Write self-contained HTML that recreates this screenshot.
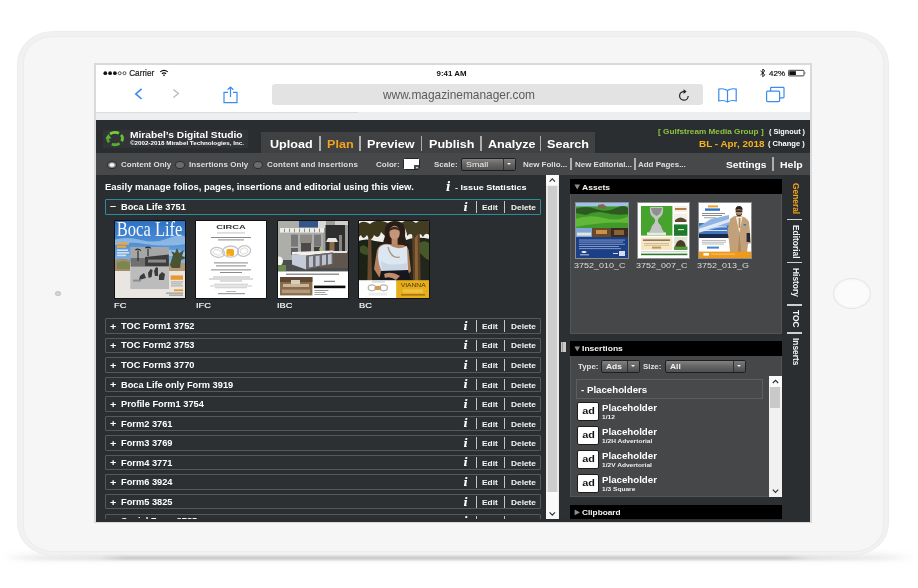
<!DOCTYPE html>
<html><head><meta charset="utf-8"><title>Mirabel's Digital Studio</title>
<style>
*{box-sizing:border-box;margin:0;padding:0}
html,body{width:918px;height:588px;background:#fff;overflow:hidden}
body{position:relative;font-family:"Liberation Sans",Arial,sans-serif;color:#fff}
.a{position:absolute;white-space:nowrap}
#root{position:absolute;left:0;top:0;width:918px;height:588px;will-change:transform}
.sx,.tab,.tl,.rt,.re,.pht,.al,.p1,.p2,.lb,.sel span{transform:scaleX(1.14);transform-origin:0 50%}
.b{font-weight:bold}
/* device */
#shadow{left:0;top:555.6px;width:918px;height:4px;background:linear-gradient(90deg,rgba(200,200,200,0) 10px,#ececec 50px,#e4e4e4 100px,#cbcbcb 125px,#cbcbcb 785px,#e2e2e2 810px,#ececec 860px,rgba(200,200,200,0) 905px);filter:blur(.8px)}
#shadow2{left:0;top:553px;width:918px;height:8px;background:linear-gradient(90deg,#fff,#f1f1f1 40px,#f1f1f1 880px,#fff);filter:blur(2px)}
#dev{left:17px;top:31px;width:872px;height:525px;border-radius:36px/33px;background:#f1f1f1;border:1px solid #ededed}
#dev2{left:22.5px;top:35.5px;width:861px;height:516.5px;border-radius:30px/27px;background:#f6f6f6;border:1px solid #ececec}
#cam{left:54.5px;top:290.5px;width:6px;height:5px;border-radius:50%;background:#d4d4d4;border:1.5px solid #c4c4c4}
#home{left:833px;top:277.5px;width:38px;height:31.5px;border-radius:50%;background:#fbfbfb;border:1.5px solid #e6e6e6;box-shadow:inset 0 0 3px #f0f0f0}
#scr{left:94px;top:63px;width:718px;height:460px;background:#fff;border:2px solid #d9d9d9;overflow:hidden}
/* ios */
.st{font-size:7.6px;color:#111;line-height:10px}
#bar{left:96px;top:111.6px;width:714px;height:8.6px;background:#edeeef}
#bar i{position:absolute;left:0;top:0;width:262px;height:1px;background:#dcdddd}
#url{left:272px;top:84.4px;width:430.8px;height:20.6px;border-radius:3px;background:#e3e3e4}
#urlt{left:272px;top:84px;width:430px;height:21.5px;line-height:21.5px;text-align:center;font-size:11.4px;color:#4a4a4a;padding-right:3px}
/* app */
#app{left:96px;top:120px;width:714px;height:401.5px;background:#2b2e31}

/* header */
#logo{left:103px;top:129.5px;width:145px;height:18.5px;background:#323437}
#tabs{left:261px;top:132px;width:334px;height:21px;background:#3f4143}
.tab{top:136px;height:16px;line-height:16px;font-size:11.05px;font-weight:bold;color:#fff}
.tsep{top:136.4px;width:1.3px;height:14.6px;background:#aeaeae}
#tool{left:96px;top:153px;width:714px;height:22px;background:#474849}
.tl{top:159px;height:11px;line-height:11px;font-size:7.02px;font-weight:bold;color:#dedede}
.rad{top:160.6px;width:9.6px;height:8.2px;border-radius:50%;background:#6b6b6b;border:1px solid #2e2e2e}
.sel{height:12.6px;border:1px solid #1f1f1f;border-radius:2px;background:linear-gradient(#828282,#666 45%,#505050)}
.sel i{position:absolute;right:0;top:0;bottom:0;width:12.4px;border-left:1px solid #303030;background:linear-gradient(#7a7a7a,#4c4c4c)}
.sel i:after{content:"";position:absolute;left:2.9px;top:4.2px;border:2.7px solid transparent;border-top:2.7px solid #f2f2f2}
.sel span{position:absolute;left:4.4px;top:1.3px;line-height:10.6px;font-size:7.8px;color:#f0f0f0}

/* left panel */
.row{left:105px;width:436px;height:15.5px;border:1px solid #56595c;background:#2d3033;border-radius:1px}
.rt{left:110px;margin-top:.9px;height:15px;line-height:15px;font-size:8.13px;font-weight:bold;color:#fff}
.ri{left:463.4px;margin-top:.6px;height:15px;line-height:15px;font-family:"DejaVu Serif",serif;font-style:italic;font-weight:bold;font-size:11.5px}
.rs{width:1px;height:11.6px;background:#c6c6c6}
.re{margin-top:.9px;height:15px;line-height:15px;font-size:7.3px;font-weight:bold;color:#f4f4f4}
.th{top:219.8px;width:72px;height:78.8px;background:#111;border-radius:1.5px}
.th svg{position:absolute;left:1px;top:1px}
.lb{top:300.4px;height:11px;line-height:11px;font-size:8.12px;color:#fff;-webkit-text-stroke:.15px #fff}
#lclip{left:96px;top:175px;width:450px;height:344px;overflow:hidden}
#vsb{left:546.2px;top:175px;width:12.9px;height:344px;background:#e9e9e9}
#vsb .t{position:absolute;left:1.9px;top:10.5px;width:8.8px;height:306.5px;background:#cdcdcd}

/* right panel */
#rp{left:559px;top:175px;width:223px;height:344px;background:#2d3033}
.ph{left:570px;width:212px;background:#000}
.pht{left:582.4px;height:15px;line-height:15px;font-size:7.50px;font-weight:bold;color:#f2f2f2}
.pb{left:570px;width:212px;background:#464748;border:1px solid #545556;border-top:0}
.at{top:202.4px;width:53.6px;height:56.6px;border:1px solid #8e8e8e;background:#fff;overflow:hidden}
.al{top:259.6px;height:11px;line-height:11px;font-size:7.89px;color:#ddd}
.adb{left:577.4px;margin-top:-.8px;width:21.8px;height:19.2px;border:1.3px solid #1c1c1c;border-radius:2px;background:#fff;color:#111;font-weight:bold;font-size:9.5px;line-height:16px;text-align:center}
.adb span{display:inline-block;transform:scaleX(1.14)}
.p1{left:601.6px;height:12px;line-height:12px;font-size:8.51px;font-weight:bold;color:#fff}
.p2{left:602.2px;height:8px;line-height:8px;font-size:5.79px;font-weight:bold;color:#f0f0f0}
.vt{transform:scaleX(1.1);left:790.4px;width:12px;font-size:8.4px;font-weight:bold;line-height:12px;writing-mode:vertical-rl;color:#f4f4f4}
.vs{left:787px;width:15px;height:1.3px;background:#d0d0d0}
</style></head><body>
<div id="root">
<svg width="0" height="0" style="position:absolute"><defs>
<filter id="b1" x="-5%" y="-5%" width="110%" height="110%"><feGaussianBlur stdDeviation=".55"/></filter>
<filter id="b2" x="-5%" y="-5%" width="110%" height="110%"><feGaussianBlur stdDeviation=".9"/></filter>
<linearGradient id="sky" x1="0" y1="0" x2="0" y2="1"><stop offset="0" stop-color="#2b6ec2"/><stop offset=".55" stop-color="#4d8fd6"/><stop offset="1" stop-color="#86b4e2"/></linearGradient>
</defs></svg>
<div class="a" id="shadow2"></div>
<div class="a" id="dev"></div>
<div class="a" id="dev2"></div>
<div class="a" id="shadow"></div>
<div class="a" id="cam"></div>
<div class="a" id="home"></div>
<div class="a" id="scr"></div>
<!-- IOS-STATUS -->
<svg class="a" style="left:102px;top:69.1px" width="70" height="9" viewBox="0 0 70 9">
<circle cx="3.3" cy="4.2" r="1.85" fill="#111"/><circle cx="8.1" cy="4.2" r="1.85" fill="#111"/><circle cx="12.9" cy="4.2" r="1.85" fill="#111"/>
<circle cx="17.7" cy="4.2" r="1.5" fill="none" stroke="#111" stroke-width=".7"/><circle cx="22.5" cy="4.2" r="1.5" fill="none" stroke="#111" stroke-width=".7"/>
<g fill="none" stroke="#111" stroke-width="1.15"><path d="M58.2 2.9 Q62 -0.3 65.8 2.9"/><path d="M59.9 4.7 Q62 2.9 64.1 4.7"/></g><path d="M60.8 5.9 Q62 5 63.2 5.9 L62 7.3Z" fill="#111"/>
</svg>
<div class="a st" style="left:129.2px;top:69.2px;font-size:8.2px;color:#1c1c1c;-webkit-text-stroke:.2px #1c1c1c">Carrier</div>
<div class="a st b" style="left:436.5px;top:68.6px;font-size:7.9px">9:41 AM</div>
<svg class="a" style="left:759px;top:68.1px" width="8" height="10" viewBox="0 0 8 10"><path d="M1.5 2.8 L5.8 6.8 L3.8 8.8 V1 L5.8 3 L1.5 7" fill="none" stroke="#111" stroke-width=".9"/></svg>
<div class="a st" style="left:769px;top:68.8px;font-size:8px;-webkit-text-stroke:.2px #111">42%</div>
<svg class="a" style="left:787.5px;top:69.1px" width="19" height="8" viewBox="0 0 19 8"><rect x=".4" y="1.3" width="15.6" height="5.6" rx="1" fill="none" stroke="#111" stroke-width=".8"/><rect x="1.3" y="2.2" width="6.6" height="3.8" fill="#111"/><path d="M16.8 3 Q18.2 4.1 16.8 5.2Z" fill="#111"/></svg>
<!-- SAFARI -->
<svg class="a" style="left:130px;top:84px" width="60" height="20" viewBox="0 0 60 20"><path d="M11.6 4.8 L5.8 9.9 L11.6 15" fill="none" stroke="#3a8aef" stroke-width="1.6"/><path d="M43.4 5.6 L48.4 9.6 L43.4 13.6" fill="none" stroke="#b9b9b9" stroke-width="1.3"/></svg>
<svg class="a" style="left:220.5px;top:83.8px" width="20" height="22" viewBox="0 0 20 22"><g fill="none" stroke="#3a8aef" stroke-width="1.2"><path d="M7 8.4 H3 V18.6 H16 V8.4 H12"/><path d="M9.5 13 V3.2 M6.6 5.8 L9.5 3 L12.4 5.8"/></g></svg>
<div class="a" id="url"></div>
<div class="a" style="left:383px;top:84px;height:21.5px;line-height:23px;font-size:11.9px;color:#5c5c5c">www.magazinemanager.com</div>
<svg class="a" style="left:677px;top:88px" width="14" height="15" viewBox="0 0 14 15"><path d="M11.2 8 A4.3 4.3 0 1 1 7 3.6" fill="none" stroke="#222" stroke-width="1.2"/><path d="M6.6 1.2 L9.6 3.6 L6.6 6Z" fill="#222"/></svg>
<svg class="a" style="left:716px;top:85.7px" width="24" height="18" viewBox="0 0 24 18"><g fill="none" stroke="#3a8aef" stroke-width="1.2"><path d="M11.5 4.6 Q7.5 1.8 2.8 3.2 V15 Q7.5 13.6 11.5 16 Q15.5 13.6 20.2 15 V3.2 Q15.5 1.8 11.5 4.6 V16"/></g></svg>
<svg class="a" style="left:764px;top:84.6px" width="24" height="20" viewBox="0 0 24 20"><g fill="none" stroke="#3a8aef" stroke-width="1.2"><rect x="2.6" y="6.2" width="13" height="10.4" rx="1"/><path d="M6.6 6 V3.2 Q6.6 2.4 7.4 2.4 H19.2 Q20 2.4 20 3.2 V12 Q20 12.8 19.2 12.8 H15.8"/></g></svg>
<div class="a" id="bar"><i></i></div>
<div class="a" id="app"></div>
<!-- APP-HEADER -->
<div class="a" id="logo"></div>
<svg class="a" style="left:103.5px;top:128.5px" width="22" height="19" viewBox="0 0 22 19"><g fill="none" stroke-width="2.8">
<path d="M6 5 A7.6 6.1 0 0 1 15 4.3" stroke="#72d03c"/><path d="M17.1 5.9 A7.6 6.1 0 0 1 17.6 12.3" stroke="#63c035"/><path d="M15.6 14.3 A7.6 6.1 0 0 1 7.8 15.2" stroke="#58b030"/><path d="M5 13.2 A7.6 6.1 0 0 1 3.6 8.6" stroke="#4fa52c"/></g>
<path d="M1.4 9.4 L4.4 5 L7.4 9.6Z" fill="#5cb833"/></svg>
<div class="a b" style="left:130px;top:128.8px;line-height:12px;font-size:9.4px;transform:scaleX(1.09);transform-origin:0 50%">Mirabel’s Digital Studio</div>
<div class="a b" style="left:130px;top:138.6px;line-height:8px;font-size:6.25px">©2002-2018 Mirabel Technologies, Inc.</div>
<div class="a" id="tabs"></div>
<div class="a tab" style="left:270px">Upload</div><div class="a tsep" style="left:319.4px"></div>
<div class="a tab" style="left:326.5px;color:#f5a31d">Plan</div><div class="a tsep" style="left:359.4px"></div>
<div class="a tab" style="left:367px">Preview</div><div class="a tsep" style="left:420.7px"></div>
<div class="a tab" style="left:428.5px">Publish</div><div class="a tsep" style="left:480.4px"></div>
<div class="a tab" style="left:487.6px">Analyze</div><div class="a tsep" style="left:540.1px"></div>
<div class="a tab" style="left:547px">Search</div>
<div class="a b sx" style="left:658px;top:126.5px;line-height:10px;font-size:7.19px;color:#8cc540">[ Gulfstream Media Group ]</div>
<div class="a b sx" style="left:768.5px;top:126.5px;line-height:10px;font-size:6.40px">( Signout )</div>
<div class="a b sx" style="left:698.5px;top:137.6px;line-height:12px;font-size:8.68px;color:#f7b219">BL - Apr, 2018</div>
<div class="a b sx" style="left:768px;top:138.8px;line-height:10px;font-size:6.58px">( Change )</div>
<div class="a" id="tool"></div>
<div class="a rad" style="left:107.2px;background:radial-gradient(#fff 0 1.3px,#8e8e8e 3.2px,#6b6b6b 4.4px)"></div>
<div class="a tl" style="left:121px">Content Only</div>
<div class="a rad" style="left:175.4px"></div>
<div class="a tl sx" style="left:189.4px;letter-spacing:.06px">Insertions Only</div>
<div class="a rad" style="left:253.4px"></div>
<div class="a tl sx" style="left:267.3px;letter-spacing:.16px">Content and Insertions</div>
<div class="a tl" style="left:376px">Color:</div>
<div class="a" style="left:403.4px;top:157.6px;width:16.2px;height:12.9px;background:#fff;border:1.2px solid #262626;border-radius:1.5px"><i style="position:absolute;right:0;bottom:0;width:5px;height:4px;background:#4a4a4a"></i><i style="position:absolute;right:.7px;bottom:.9px;border:1.8px solid transparent;border-top:2.2px solid #fff;border-bottom:0"></i></div>
<div class="a tl" style="left:434px">Scale:</div>
<div class="a sel" style="left:460.6px;top:158px;width:55.6px"><span>Small</span><i></i></div>
<div class="a tl sx" style="left:523px;letter-spacing:-.02px">New Folio...</div><div class="a tsep" style="left:570.4px;top:158px;height:12px"></div>
<div class="a tl sx" style="left:574.6px;letter-spacing:-.02px">New Editorial...</div><div class="a tsep" style="left:634.4px;top:158px;height:12px"></div>
<div class="a tl sx" style="left:638.4px;letter-spacing:-.02px">Add Pages...</div>
<div class="a b sx" style="left:725.5px;top:158.7px;line-height:13px;font-size:9.01px">Settings</div><div class="a tsep" style="left:772.4px;top:157px;height:14px"></div>
<div class="a b sx" style="left:779.6px;top:158.7px;line-height:13px;font-size:9.21px">Help</div>
<!-- APP-LEFT -->
<div class="a" id="lclip"><div class="a" style="left:-96px;top:-175px">
<div class="a b sx" style="left:104.7px;top:180.5px;line-height:12px;font-size:8.32px">Easily manage folios, pages, insertions and editorial using this view.</div>
<div class="a ri" style="left:446px;top:179.5px;font-size:12px">i</div><div class="a b sx" style="left:455px;top:181.9px;line-height:12px;font-size:7.96px">- Issue Statistics</div>
<div class="a row" style="top:199.30px;border-color:#2a8d9c"></div><div class="a rt" style="top:199.30px;left:110px;font-size:9.6px;margin-top:-1.1px">–</div><div class="a rt" style="top:199.30px;left:121px">Boca Life 3751</div><div class="a ri" style="top:199.30px">i</div><div class="a rs" style="left:476px;top:201.30px"></div><div class="a re" style="top:199.30px;left:482px">Edit</div><div class="a rs" style="left:504px;top:201.30px"></div><div class="a re" style="top:199.30px;left:510.6px">Delete</div>
<div class="a th" style="left:113.8px"><svg width="70" height="76.8" viewBox="0 0 70 76.8"><rect width="70" height="77" fill="#e9e6e2"/>
<g filter="url(#b1)"><rect x="-2" y="-2" width="74" height="44" fill="url(#sky)"/>
<path d="M-2 19 Q12 15 26 19 T54 17 T72 18 V23 Q50 26 30 23 T-2 25Z" fill="#d9e8f6" opacity=".45"/><path d="M40 30 Q52 27 72 31 V35 H40Z" fill="#cfe0f2" opacity=".5"/>
<path d="M-2 40 Q6 36 15 39 V52 H-2Z" fill="#a58a68"/><path d="M2 42 Q8 38 15 42 V48 H2Z" fill="#7c8650"/>
<rect x="54" y="42" width="18" height="9" fill="#b39878"/><path d="M55 44 L58 34 L56 30 L60 32 L62 27 L64 32 L69 29 L67 35 L71 37 L66 39 L65 47 H57Z" fill="#465230"/>
<rect x="-2" y="50" width="74" height="30" fill="#e9e6e2"/>
<rect x="2" y="21.6" width="12" height="2.2" fill="#f0a53a"/><rect x="2" y="24.6" width="9" height="2.2" fill="#f0a53a"/><rect x="2" y="28.4" width="11" height="1.6" fill="#cfe0f4"/><rect x="2" y="31" width="12" height="1.6" fill="#cfe0f4"/><rect x="2" y="33.6" width="9" height="1.6" fill="#cfe0f4"/>
<rect x="15.6" y="26.2" width="38.2" height="41.6" fill="#b0b0b0"/>
<rect x="15.6" y="26.2" width="38.2" height="12" fill="#a6a6a6"/><rect x="15.6" y="37" width="38.2" height="9" fill="#707070"/><path d="M30 36 L53.8 33.6 V45 H30Z" fill="#3e3e3e"/><rect x="33" y="38.6" width="18" height="3" fill="#8a8a8a"/>
<path d="M23 40 V29.6 M20.4 29 Q23 27 26 29.6 M33 35 V27.6 M30.4 27 Q33 25 36 27.4" stroke="#262626" stroke-width="1.1" fill="none"/>
<rect x="15.6" y="45.6" width="38.2" height="22.2" fill="#bcbcbc"/>
<path d="M25 55 l4-3 2 5 -7 2Z M33 52 l2.6-4 2 1 -1 7 -3 1Z M39 50 l2-4 2 1 0 8 -3 0Z M44 54 l3-3 3 2 -1 6 -5 0Z" fill="#3a3a3a"/><rect x="18" y="58.6" width="8" height="2" fill="#8e8e8e"/>
<rect x="55.6" y="54.4" width="12.4" height="4.4" fill="#e8982e"/><g fill="#a9a39b"><rect x="56" y="60.4" width="12" height="1"/><rect x="56" y="62.4" width="11" height="1"/><rect x="56" y="64.4" width="12" height="1"/></g><rect x="59" y="68.4" width="9" height="1.8" fill="#e8982e"/><rect x="51" y="71.6" width="17" height="1" fill="#8c867e"/><rect x="54" y="73.6" width="14" height="1" fill="#8c867e"/>
</g>
<text x="1.8" y="15.2" font-family="Liberation Serif,serif" font-size="20.5" fill="#fff" fill-opacity=".95" textLength="65.6" lengthAdjust="spacingAndGlyphs">Boca Life</text></svg></div>
<div class="a th" style="left:195.3px"><svg width="70" height="76.8" viewBox="0 0 70 76.8"><rect width="70" height="77" fill="#fff"/>
<text x="35" y="8.5" text-anchor="middle" font-family="Liberation Sans,sans-serif" font-weight="bold" font-size="6.2" fill="#333" textLength="29.4" lengthAdjust="spacingAndGlyphs">CIRCA</text>
<g filter="url(#b1)"><rect x="21" y="11.6" width="28" height=".7" fill="#aaa"/>
<g fill="#8a8a8a"><rect x="15" y="16" width="40" height="1"/><rect x="22" y="18.4" width="26" height="1"/>
<rect x="18" y="41.4" width="34" height="1"/><rect x="20" y="44.4" width="30" height="1"/><rect x="15" y="48.4" width="40" height="1"/><rect x="24" y="51" width="22" height="1"/></g>
<g fill="#a6a6a6"><rect x="17" y="55.6" width="37" height=".8"/><rect x="13" y="57.6" width="44" height=".8"/><rect x="24" y="59.6" width="22" height=".8"/>
<rect x="18" y="62.8" width="34" height=".8" fill="#bcbcbc"/><rect x="14" y="64.6" width="42" height=".8" fill="#bcbcbc"/><rect x="19" y="66.4" width="32" height=".8" fill="#bcbcbc"/>
<rect x="30" y="70.2" width="10" height=".8"/><rect x="22" y="72.2" width="27" height="1" fill="#8a8a8a"/></g>
<g fill="none" stroke="#c2c6ca" stroke-width="1.3"><ellipse cx="21.6" cy="31.4" rx="7" ry="4.8" transform="rotate(12 21.6 31.4)"/><ellipse cx="34.6" cy="30.6" rx="8" ry="5.6"/><ellipse cx="48" cy="30" rx="6.6" ry="5.2" transform="rotate(-14 48 30)"/></g>
<g fill="none" stroke="#dcd8c8" stroke-width=".9"><ellipse cx="21.6" cy="31.4" rx="4.6" ry="2.6" transform="rotate(12 21.6 31.4)"/><ellipse cx="48" cy="30" rx="4" ry="3" transform="rotate(-14 48 30)"/></g>
<rect x="30.4" y="28" width="7.6" height="7" rx="1.6" fill="#f6a61c"/><circle cx="33" cy="34" r="1.6" fill="#f9c53e"/></g></svg></div>
<div class="a th" style="left:276.8px"><svg width="70" height="76.8" viewBox="0 0 70 76.8"><rect width="70" height="77" fill="#fff"/>
<g filter="url(#b1)"><rect x="-1" y="-1" width="72" height="51.6" fill="#9c9c99"/>
<rect x="-1" y="-1" width="46" height="40" fill="#adadaa"/><rect x="21" y="-1" width="19" height="7.4" fill="#33548a"/><rect x="40" y="-1" width="8" height="8" fill="#d9d9d6"/><rect x="57" y="-1" width="14" height="5" fill="#cfcfcc"/>
<rect x="2" y="7" width="44" height="4.6" fill="#ecebe6"/><g fill="#8e8e88"><rect x="6" y="7.6" width="1" height="3.6"/><rect x="11" y="7.6" width="1" height="3.6"/><rect x="16" y="7.6" width="1" height="3.6"/><rect x="21" y="7.6" width="1" height="3.6"/><rect x="26" y="7.6" width="1" height="3.6"/><rect x="31" y="7.6" width="1" height="3.6"/><rect x="36" y="7.6" width="1" height="3.6"/><rect x="41" y="7.6" width="1" height="3.6"/></g>
<rect x="13" y="13.6" width="7" height="12" fill="#77787a"/><rect x="22" y="13.6" width="12" height="9" fill="#8e8b84"/><rect x="23" y="22" width="10" height="12" fill="#4c4a48"/><rect x="36" y="13.6" width="7" height="12" fill="#77787a"/><rect x="13" y="27" width="7" height="7" fill="#5e5e5e"/><rect x="36" y="26" width="6" height="8" fill="#3e3e3e"/>
<rect x="47.5" y="4" width="19.5" height="27" fill="#2f2e2d"/><rect x="61" y="14" width="3" height="18" fill="#8a8480"/><path d="M50 17 h8 l2 4 h-12Z" fill="#e8e6e0"/><rect x="51.5" y="21" width="5" height="9" fill="#8a6c4c"/>
<rect x="-1" y="39" width="72" height="12" fill="#4b4d50"/><rect x="42" y="31" width="28" height="16" fill="#5e5750"/><rect x="55" y="30" width="14" height="2" fill="#e6e4de"/>
<path d="M14 31 L55 29.4 L55 31.6 L28 34.6 L14 33Z" fill="#f1f0ec"/><path d="M14 33 L28 34.6 V48.6 L14 43.6Z" fill="#c3ccd8"/><path d="M28 34.6 L55 31.6 V43 L28 48.6Z" fill="#6e6a68"/>
<g fill="#b9c3d1"><path d="M31 35.6 l4-.5 v10.6 l-4 .9Z"/><path d="M37.6 34.9 l4-.5 v10.2 l-4 .9Z"/><path d="M44 34.2 l4-.5 v9.9 l-4 .9Z"/><path d="M50 33.5 l3.6-.4 v9.6 l-3.6 .8Z"/></g>
<ellipse cx="1" cy="40" rx="4" ry="4.6" fill="#f4f4f2"/><rect x="-1" y="44" width="9" height="6" fill="#6a8a4e"/><circle cx="42.5" cy="28.4" r="1.4" fill="#9ccb5a"/>
<rect x="-1" y="50.4" width="72" height="28" fill="#fff"/>
<rect x="8" y="52.6" width="53" height="1.2" fill="#7a7a7a"/>
<rect x="2" y="56" width="32.4" height="18.4" fill="#8b6c4a"/><rect x="2" y="56" width="32.4" height="5" fill="#5f4a36"/><rect x="5" y="63" width="26" height="3" fill="#c9b69c"/><rect x="4" y="68.6" width="28" height="3.6" fill="#b49a7c"/><rect x="13" y="59" width="9" height="4" fill="#d9cdbb"/>
<rect x="46" y="59.8" width="11" height="1" fill="#666"/><rect x="36" y="64.6" width="31.4" height="2.6" fill="#111"/><rect x="36.4" y="69" width="14" height=".9" fill="#8a8a8a"/><rect x="36.4" y="71" width="11" height=".9" fill="#9a9a9a"/><rect x="36.4" y="73" width="13" height=".9" fill="#9a9a9a"/>
</g></svg></div>
<div class="a th" style="left:358.4px"><svg width="70" height="76.8" viewBox="0 0 70 76.8"><rect width="70" height="77" fill="#fff"/>
<g filter="url(#b1)"><rect x="-1" y="-1" width="72" height="61" fill="#efefec"/>
<path d="M-1 20 Q8 17 16 20 L30 22 V60 H-1Z" fill="#1f2019"/><path d="M44 20 Q56 15 71 18 V60 H44Z" fill="#24251c"/><rect x="20" y="24" width="30" height="36" fill="#1f2019"/>
<path d="M8.4 60 L9.4 4 L12 4 L13 60Z" fill="#6a4a2e"/><path d="M54 60 L53 2 L60.6 2 L61.6 60Z" fill="#5e4226"/><path d="M56 60 L56 6 L58.6 6 L59 60Z" fill="#8a6438"/>
<path d="M-1 4 Q3 -2 11 3 Q18 -3 29 2 L27 8 Q30 12 28 17 L22 11 Q20 19 15 14 Q12 22 8 14 Q4 20 2 14 L-1 17Z" fill="#3c381f"/>
<path d="M42 2 Q50 -3 57 2 Q64 -4 71 1 V15 Q67 10 64 16 Q60 9 56 17 Q52 10 48 15 Q48 8 42 2Z" fill="#423c22"/>
<path d="M60 22 Q67 18 71 23 V40 Q65 37 61 32Z" fill="#46582a"/><path d="M1 26 Q5 22 9 27 V34 Q4 34 1 31Z" fill="#3f4f28"/>
<path d="M26 15 Q24 0 36 0 Q48 0 46 15 Q50 27 46 34 L40 27 L31 27 L26 33 Q22 25 26 15Z" fill="#2a1e19"/>
<ellipse cx="35.6" cy="12" rx="5.2" ry="7.2" fill="#c6967a"/><path d="M30.6 10 Q35.6 6.4 40.6 10 L40.4 8 Q35.6 3.6 30.8 8Z" fill="#3a2a22"/><rect x="32.6" y="18" width="6" height="6.6" fill="#b98a6c"/>
<path d="M18 29 Q21 22 29 23 L44 24 Q50 25 50 32 L52 50 L47 56 L20 56 L15 48Z" fill="#b58262"/>
<path d="M20 27 Q24 22 31 24 Q38 30 48 25 L49 50 L23 51 Q17 38 20 27Z" fill="#dde7f2"/><path d="M29 26 Q32 38 41 36" stroke="#a3927c" stroke-width="1.2" fill="none"/><path d="M22 40 Q30 46 48 42 V50 L23 51Z" fill="#c9d6e6"/>
<path d="M22 50 L49 49 L52 60 L20 60Z" fill="#15151a"/><path d="M25 53 Q33 50 41 55 L37 59 Q31 55 26 57Z" fill="#bd8c6c"/>
<rect x="-1" y="59.2" width="38.2" height="19" fill="#fff"/><rect x="37.2" y="59.2" width="34" height="19" fill="#e7ae1c"/>
<rect x="13" y="60.6" width="13" height=".7" fill="#aaa"/>
<g fill="none" stroke="#b4b4b0" stroke-width="1.2"><ellipse cx="13" cy="66.8" rx="3.8" ry="3"/><ellipse cx="24.6" cy="66.8" rx="3.8" ry="3"/></g><ellipse cx="18.8" cy="67" rx="3.4" ry="2.2" fill="#d29a58"/><rect x="10" y="71.6" width="18" height="3" fill="#efedea"/>
<rect x="44" y="68.4" width="20" height="3.4" fill="#f0c040"/><rect x="42" y="73.4" width="24" height="1" fill="#7a5c14"/></g>
<text x="54.2" y="66.4" text-anchor="middle" font-family="Liberation Sans,sans-serif" font-size="5.2" fill="#4a3410" textLength="25" lengthAdjust="spacingAndGlyphs">VIANNA</text></svg></div>
<div class="a lb" style="left:114.0px">FC</div><div class="a lb" style="left:195.5px">IFC</div><div class="a lb" style="left:277.0px">IBC</div><div class="a lb" style="left:358.5px">BC</div>
<div class="a row" style="top:318.00px"></div><div class="a rt" style="top:318.00px;left:109.8px;font-size:9.6px;margin-top:.6px">+</div><div class="a rt" style="top:318.00px;left:121px">TOC Form1 3752</div><div class="a ri" style="top:318.00px">i</div><div class="a rs" style="left:476px;top:320.00px"></div><div class="a re" style="top:318.00px;left:482px">Edit</div><div class="a rs" style="left:504px;top:320.00px"></div><div class="a re" style="top:318.00px;left:510.6px">Delete</div>
<div class="a row" style="top:337.55px"></div><div class="a rt" style="top:337.55px;left:109.8px;font-size:9.6px;margin-top:.6px">+</div><div class="a rt" style="top:337.55px;left:121px">TOC Form2 3753</div><div class="a ri" style="top:337.55px">i</div><div class="a rs" style="left:476px;top:339.55px"></div><div class="a re" style="top:337.55px;left:482px">Edit</div><div class="a rs" style="left:504px;top:339.55px"></div><div class="a re" style="top:337.55px;left:510.6px">Delete</div>
<div class="a row" style="top:357.10px"></div><div class="a rt" style="top:357.10px;left:109.8px;font-size:9.6px;margin-top:.6px">+</div><div class="a rt" style="top:357.10px;left:121px">TOC Form3 3770</div><div class="a ri" style="top:357.10px">i</div><div class="a rs" style="left:476px;top:359.10px"></div><div class="a re" style="top:357.10px;left:482px">Edit</div><div class="a rs" style="left:504px;top:359.10px"></div><div class="a re" style="top:357.10px;left:510.6px">Delete</div>
<div class="a row" style="top:376.65px"></div><div class="a rt" style="top:376.65px;left:109.8px;font-size:9.6px;margin-top:.6px">+</div><div class="a rt" style="top:376.65px;left:121px">Boca Life only Form 3919</div><div class="a ri" style="top:376.65px">i</div><div class="a rs" style="left:476px;top:378.65px"></div><div class="a re" style="top:376.65px;left:482px">Edit</div><div class="a rs" style="left:504px;top:378.65px"></div><div class="a re" style="top:376.65px;left:510.6px">Delete</div>
<div class="a row" style="top:396.20px"></div><div class="a rt" style="top:396.20px;left:109.8px;font-size:9.6px;margin-top:.6px">+</div><div class="a rt" style="top:396.20px;left:121px">Profile Form1 3754</div><div class="a ri" style="top:396.20px">i</div><div class="a rs" style="left:476px;top:398.20px"></div><div class="a re" style="top:396.20px;left:482px">Edit</div><div class="a rs" style="left:504px;top:398.20px"></div><div class="a re" style="top:396.20px;left:510.6px">Delete</div>
<div class="a row" style="top:415.75px"></div><div class="a rt" style="top:415.75px;left:109.8px;font-size:9.6px;margin-top:.6px">+</div><div class="a rt" style="top:415.75px;left:121px">Form2 3761</div><div class="a ri" style="top:415.75px">i</div><div class="a rs" style="left:476px;top:417.75px"></div><div class="a re" style="top:415.75px;left:482px">Edit</div><div class="a rs" style="left:504px;top:417.75px"></div><div class="a re" style="top:415.75px;left:510.6px">Delete</div>
<div class="a row" style="top:435.30px"></div><div class="a rt" style="top:435.30px;left:109.8px;font-size:9.6px;margin-top:.6px">+</div><div class="a rt" style="top:435.30px;left:121px">Form3 3769</div><div class="a ri" style="top:435.30px">i</div><div class="a rs" style="left:476px;top:437.30px"></div><div class="a re" style="top:435.30px;left:482px">Edit</div><div class="a rs" style="left:504px;top:437.30px"></div><div class="a re" style="top:435.30px;left:510.6px">Delete</div>
<div class="a row" style="top:454.85px"></div><div class="a rt" style="top:454.85px;left:109.8px;font-size:9.6px;margin-top:.6px">+</div><div class="a rt" style="top:454.85px;left:121px">Form4 3771</div><div class="a ri" style="top:454.85px">i</div><div class="a rs" style="left:476px;top:456.85px"></div><div class="a re" style="top:454.85px;left:482px">Edit</div><div class="a rs" style="left:504px;top:456.85px"></div><div class="a re" style="top:454.85px;left:510.6px">Delete</div>
<div class="a row" style="top:474.40px"></div><div class="a rt" style="top:474.40px;left:109.8px;font-size:9.6px;margin-top:.6px">+</div><div class="a rt" style="top:474.40px;left:121px">Form6 3924</div><div class="a ri" style="top:474.40px">i</div><div class="a rs" style="left:476px;top:476.40px"></div><div class="a re" style="top:474.40px;left:482px">Edit</div><div class="a rs" style="left:504px;top:476.40px"></div><div class="a re" style="top:474.40px;left:510.6px">Delete</div>
<div class="a row" style="top:493.95px"></div><div class="a rt" style="top:493.95px;left:109.8px;font-size:9.6px;margin-top:.6px">+</div><div class="a rt" style="top:493.95px;left:121px">Form5 3825</div><div class="a ri" style="top:493.95px">i</div><div class="a rs" style="left:476px;top:495.95px"></div><div class="a re" style="top:493.95px;left:482px">Edit</div><div class="a rs" style="left:504px;top:495.95px"></div><div class="a re" style="top:493.95px;left:510.6px">Delete</div>
<div class="a row" style="top:513.50px"></div><div class="a rt" style="top:513.50px;left:109.8px;font-size:9.6px;margin-top:.6px">+</div><div class="a rt" style="top:513.50px;left:121px">Social Form 3785</div><div class="a ri" style="top:513.50px">i</div><div class="a rs" style="left:476px;top:515.50px"></div><div class="a re" style="top:513.50px;left:482px">Edit</div><div class="a rs" style="left:504px;top:515.50px"></div><div class="a re" style="top:513.50px;left:510.6px">Delete</div>
</div></div>
<div class="a" id="vsb"><div class="t"></div><svg class="a" style="left:0;top:0" width="12.5" height="344" viewBox="0 0 12.5 344"><rect width="12.5" height="10.5" fill="#fafafa"/><rect y="317" width="12.5" height="27" fill="#fafafa"/><path d="M3.6 6.6 L6.3 3.9 L9 6.6 M3.6 337.4 L6.3 340.1 L9 337.4" fill="none" stroke="#333" stroke-width="1.2"/></svg></div>
<!-- APP-RIGHT -->
<div class="a" id="rp"></div>
<div class="a ph" style="top:179px;height:15.2px"></div><svg class="a" style="left:574px;top:184px" width="7" height="6"><path d="M.4 .6 H6 L3.2 5.6Z" fill="#8c8c8c"/></svg><div class="a pht" style="top:180.1px">Assets</div>
<div class="a pb" style="top:194px;height:140px"></div>
<div class="a at" style="left:575px"><svg width="52" height="55" viewBox="0 0 52 55"><g filter="url(#b1)"><rect x="-1" y="-1" width="54" height="57" fill="#1d3f86"/>
<rect x="-1" y="-1" width="54" height="6" fill="#9cc3ea"/><rect x="-1" y="3.4" width="54" height="22" fill="#3f9a2c"/><path d="M-1 6 Q10 2 20 6 T40 5 T53 7 V11 Q40 13 30 10 T10 12 L-1 10Z" fill="#2f5a22"/><path d="M-1 16 Q14 11 28 15 T53 13 V20 Q30 18 -1 24Z" fill="#62b838"/><path d="M22 2 l5-1 4 3 -3 2 -6-1Z" fill="#7a6a4a"/>
<rect x="-1" y="25" width="54" height="9" fill="#5b4a36"/><rect x="-1" y="25" width="17" height="9" fill="#7fa6d6"/><rect x="1" y="29.6" width="14" height="3" fill="#e9e4da"/><rect x="17" y="25" width="17" height="9" fill="#6a4a2c"/><rect x="20" y="27" width="11" height="4" fill="#c8924e"/><rect x="35" y="25" width="18" height="9" fill="#3a2c20"/><rect x="38" y="27" width="10" height="5" fill="#8a6236"/>
<g fill="#8ea3cf"><rect x="3" y="36.6" width="46" height=".9"/><rect x="3" y="38.6" width="44" height=".9"/><rect x="3" y="40.8" width="46" height=".9"/><rect x="3" y="43" width="40" height=".9"/><rect x="3" y="45.2" width="42" height=".9"/></g>
<path d="M5 49 q3-2 6 0 q-3 2-6 0Z" fill="#fff"/><rect x="4" y="51.4" width="9" height=".9" fill="#cfd8ec"/><rect x="43" y="48" width="6" height="5" fill="#d5dcee"/><rect x="37" y="50" width="5" height="1" fill="#cfd8ec"/></g></svg></div>
<div class="a at" style="left:636.7px"><svg width="52" height="55" viewBox="0 0 52 55"><g filter="url(#b1)"><rect x="-1" y="-1" width="54" height="57" fill="#fff"/>
<rect x="3" y="3" width="31.4" height="29.6" fill="#45a32f"/><path d="M12 4 H25 Q26 12 21 15 Q19 17 20.6 20 Q23 22 24 26 L26 29.6 H11 L13 26 Q14 22 16.4 20 Q18 17 16 15 Q11 12 12 4Z" fill="#c4c4c4"/><path d="M13 5 H24 Q24 10 18.5 13 Q13 10 13 5Z" fill="#8f8f8f"/><rect x="9" y="29.4" width="19" height="3" fill="#e8e8e8"/>
<rect x="36" y="3" width="13.4" height="6" fill="#f4efe8"/><rect x="37" y="5.2" width="11.4" height="1.6" fill="#a8641e"/><rect x="36" y="10.6" width="13.4" height="9" fill="#f4f0e8"/><path d="M37 17 q5.6-5 11.4 0 v2 h-11.4Z" fill="#5a4632"/><rect x="36" y="21.4" width="13.4" height="11.4" fill="#1f7a2c"/><rect x="40" y="26" width="6" height="1.2" fill="#cfe3c8"/><rect x="36" y="34" width="13.4" height="13" fill="#dfe6d6"/><path d="M37 45 q1-8 6-8 q5 1 5 9Z" fill="#4a3a26"/><rect x="36" y="43.6" width="13.4" height="3.4" fill="#4f9a36"/>
<rect x="3" y="34.4" width="31.4" height="12.6" fill="#f6e6c4"/><rect x="5" y="36.4" width="27" height="1.6" fill="#8a7a5a"/><g fill="#c9b48c"><rect x="6" y="40" width="25" height=".8"/><rect x="6" y="41.8" width="25" height=".8"/></g><rect x="14" y="43.6" width="9" height="2" fill="#b89a62"/>
<rect x="3" y="48.4" width="46.4" height=".8" fill="#bbb"/><rect x="3" y="50.6" width="46.4" height="1.6" fill="#2f7a2a"/></g></svg></div>
<div class="a at" style="left:698.2px"><svg width="52" height="55" viewBox="0 0 52 55"><g filter="url(#b1)"><rect x="-1" y="-1" width="54" height="57" fill="#fff"/>
<rect x="-1" y="20" width="32" height="15" fill="#3f74c0"/><path d="M-1 24 L12 16 L30 12 V22 L-1 30Z" fill="#8fb4e4"/><path d="M-1 26 L30 16 V19 L-1 30Z" fill="#dfe9f6"/><rect x="-1" y="31" width="31" height="4" fill="#1d2c4a"/><g fill="#e6eefa"><rect x="2" y="27" width="26" height=".9"/><rect x="8" y="23.4" width="20" height=".9"/></g>
<rect x="9" y="2.4" width="10" height="2" fill="#f0a12a"/><rect x="6" y="5.4" width="15" height="2.4" fill="#2f74c8"/><g fill="#8a8a8a"><rect x="3" y="10" width="23" height="1"/><rect x="3" y="12" width="20" height="1"/><rect x="5" y="14.4" width="12" height=".8"/></g>
<g fill="#a9a9a9"><rect x="3" y="37" width="24" height=".8"/><rect x="3" y="38.8" width="24" height=".8"/><rect x="3" y="40.6" width="22" height=".8"/></g><rect x="8" y="43.6" width="12" height="2" fill="#3f86d0"/>
<path d="M31 16 Q35 12 40 13 Q47 13 50 19 L52 40 L49 41 L48 49 H31 L30 38 L28.4 28Z" fill="#c2a07a"/><path d="M37 14 L40.4 30 L43.4 14Z" fill="#f2efe8"/><rect x="39.6" y="15" width="1.8" height="10" fill="#b88a52"/><path d="M40.4 30 L39 49 H42Z" fill="#a8875f"/>
<ellipse cx="40" cy="8.6" rx="3.4" ry="4.2" fill="#b98a66"/><path d="M36.4 7 Q36.6 3 40 3 Q43.6 3 43.6 7 Q40 5.4 36.4 7Z" fill="#2a2420"/><rect x="36.8" y="7.4" width="6.4" height="1.5" fill="#222"/><path d="M37.4 10.6 Q40 13.6 42.8 10.6 V12 Q40 14.4 37.4 12Z" fill="#3a2e28"/>
<rect x="47.6" y="30" width="3.4" height="9" fill="#222a36"/><rect x="44.6" y="21" width="2.4" height="1.6" fill="#3f74c0"/>
<rect x="-1" y="48.6" width="54" height="7" fill="#ef9a1e"/><rect x="4.4" y="50" width="5.6" height="2.6" fill="#fff"/><rect x="12" y="50.6" width="24" height="1" fill="#f6c67c"/></g></svg></div>
<div class="a al" style="left:574.0px">3752_010_C</div><div class="a al" style="left:635.6px">3752_007_C</div><div class="a al" style="left:697.2px">3752_013_G</div>
<div class="a ph" style="top:341px;height:14.6px"></div><svg class="a" style="left:574px;top:345.8px" width="7" height="6"><path d="M.4 .6 H6 L3.2 5.6Z" fill="#8c8c8c"/></svg><div class="a pht" style="top:340.9px">Insertions</div>
<div class="a" style="left:561.2px;top:342px;width:4.8px;height:10px;background:repeating-linear-gradient(90deg,#c9c9c9 0 1.4px,#9a9a9a 1.4px 2.2px)"></div>
<div class="a pb" style="top:355.6px;height:141.8px"></div>
<div class="a sx b" style="left:578px;top:361px;height:11px;line-height:11px;font-size:6.9px;color:#e2e2e2">Type:</div><div class="a sel" style="left:601px;top:360px;width:39px;height:13px"><span style="font-weight:bold;font-size:7.4px">Ads</span><i></i></div><div class="a sx b" style="left:643px;top:361px;height:11px;line-height:11px;font-size:6.9px;color:#e2e2e2">Size:</div><div class="a sel" style="left:665px;top:360px;width:81px;height:13px"><span style="font-weight:bold;font-size:7.4px">All</span><i></i></div>
<div class="a" style="left:576px;top:379.4px;width:187px;height:19.4px;border:1px solid #5d5e5f;background:#48494b"></div><div class="a b sx" style="left:581.4px;top:383.6px;line-height:12px;font-size:8.51px">- Placeholders</div>
<div class="a adb" style="top:402.8px"><span>ad</span></div><div class="a p1" style="top:402.2px">Placeholder</div><div class="a p2" style="top:412.8px">1/12</div>
<div class="a adb" style="top:426.7px"><span>ad</span></div><div class="a p1" style="top:426.1px">Placeholder</div><div class="a p2" style="top:436.7px">1/2H Advertorial</div>
<div class="a adb" style="top:450.6px"><span>ad</span></div><div class="a p1" style="top:450.0px">Placeholder</div><div class="a p2" style="top:460.6px">1/2V Advertorial</div>
<div class="a adb" style="top:474.5px"><span>ad</span></div><div class="a p1" style="top:473.9px">Placeholder</div><div class="a p2" style="top:484.5px">1/3 Square</div>
<div class="a" style="left:768.8px;top:376px;width:13px;height:121px;background:#f1f1f1"><div class="a" style="left:0;top:0;width:13px;height:11px;background:#fbfbfb"></div><div class="a" style="left:1.6px;top:11px;width:9.6px;height:21.4px;background:#c9c9c9"></div><svg class="a" style="left:0;top:0" width="13" height="121"><path d="M3.8 7 L6.5 4.3 L9.2 7 M3.8 113.6 L6.5 116.3 L9.2 113.6" fill="none" stroke="#333" stroke-width="1.2"/></svg></div>
<div class="a ph" style="top:504.6px;height:14.3px"></div><svg class="a" style="left:574px;top:508.6px" width="7" height="7"><path d="M.6 .6 L6 3.4 L.6 6.2Z" fill="#8c8c8c"/></svg><div class="a pht sx" style="top:504.6px;font-size:7.28px">Clipboard</div>
<div class="a vt" style="top:183px;color:#f5a31d">General</div><div class="a vs" style="top:219px"></div><div class="a vt" style="top:225px">Editorial</div><div class="a vs" style="top:261.7px"></div><div class="a vt" style="top:267.6px">History</div><div class="a vs" style="top:304.4px"></div><div class="a vt" style="top:310.4px">TOC</div><div class="a vs" style="top:332.4px"></div><div class="a vt" style="top:338.4px">Inserts</div>
</div>
</body></html>
